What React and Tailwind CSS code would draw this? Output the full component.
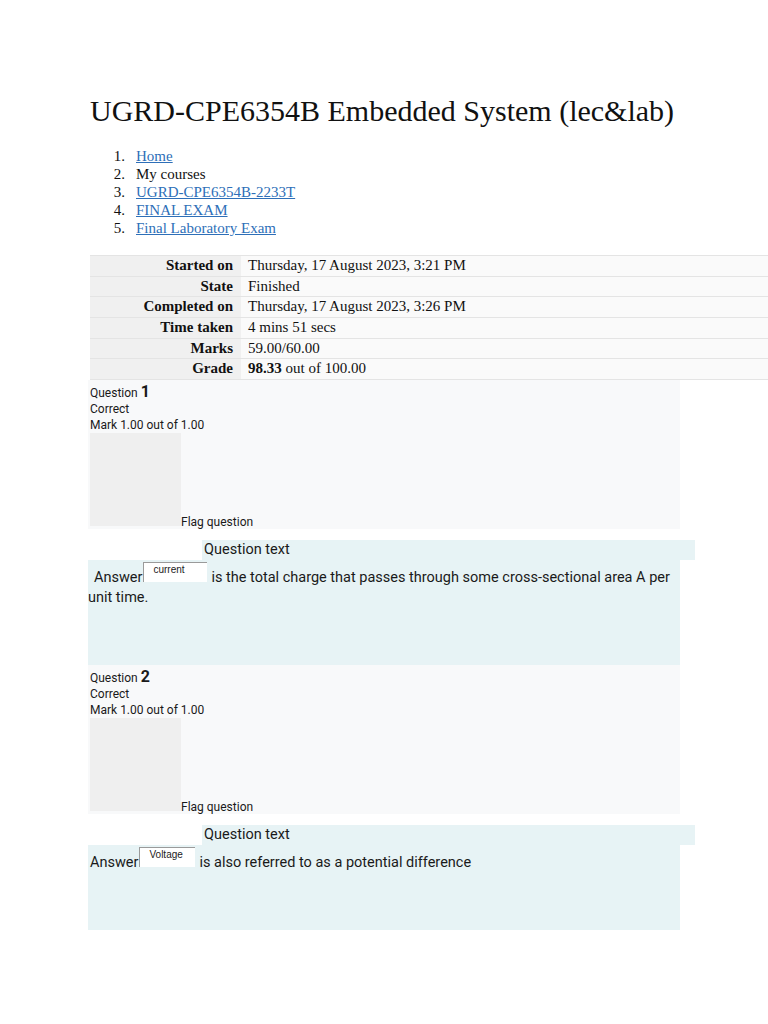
const summary = [
  ['Started on', 'Thursday, 17 August 2023, 3:21 PM'],
  ['State', 'Finished'],
  ['Completed on', 'Thursday, 17 August 2023, 3:26 PM'],
  ['Time taken', '4 mins 51 secs'],
  ['Marks', '59.00/60.00'],
  ['Grade', null],
];

const crumbs = [
  ['Home', true],
  ['My courses', false],
  ['UGRD-CPE6354B-2233T', true],
  ['FINAL EXAM', true],
  ['Final Laboratory Exam', true],
];

const sans = { fontFamily: 'Roboto, "Noto Sans", sans-serif' };

function QuestionInfo({ num }) {
  return (
    <div className="w-[592px] h-[149px] bg-[#f8f9fa] pt-[3px] pl-[2px] text-[12px] text-[#1a1a1a] flex flex-col">
      <div className="h-[18px] leading-[18px]">
        Question <span className="text-[16px] font-bold">{num}</span>
      </div>
      <div className="h-[16px] leading-[16px]">Correct</div>
      <div className="h-[16px] leading-[16px]">Mark 1.00 out of 1.00</div>
      <div className="flex items-end">
        <div className="w-[91px] h-[93px] bg-[#efefef]" />
        <span className="leading-[8px]">Flag question</span>
      </div>
    </div>
  );
}

function QuestionText({ answer, inputW, lead, children, h }) {
  return (
    <div className="pt-[11px]">
      <div className="ml-[114px] w-[493px] h-[20px] bg-[#e7f3f5] pl-[2px] text-[14.5px] leading-[20px] text-[#1a1a1a]">
        Question text
      </div>
      <div className={`w-[592px] ${h} bg-[#e7f3f5] pt-[8px] text-[14.5px] leading-[20px] text-[#1a1a1a]`}>
        <span className={lead}>Answer</span>
        <span
          className="relative -top-[6px] ml-[1px] inline-block h-[20px] align-top bg-white border-t border-l border-[#9a9a9a] text-[10px] leading-[14px] pl-[9px] text-[#222] mr-[4px]"
          style={{ fontFamily: '"Liberation Sans", Arial, sans-serif', width: inputW }}
        >
          {answer}
        </span>
        {children}
      </div>
    </div>
  );
}

export default function App() {
  return (
    <div className="bg-white min-h-[1024px] w-[768px] overflow-hidden pt-[92px] pl-[88px]">
      <div style={{ fontFamily: '"Liberation Serif", "Times New Roman", serif' }} className="text-[#111]">
        <h1 className="pl-[2px] text-[30px] leading-[38px] font-normal">
          UGRD-CPE6354B Embedded System (lec&amp;lab)
        </h1>
        <ol className="mt-[17px] text-[15px] leading-[18px]">
          {crumbs.map(([t, link], i) => (
            <li key={t} className="flex">
              <span className="w-[37px] text-right">{i + 1}.</span>
              <span className="pl-[11px]">
                {link ? <a href="#" className="text-[#2e6fb8] underline">{t}</a> : t}
              </span>
            </li>
          ))}
        </ol>
        <div className="mt-[18px] ml-[2px] w-[678px] border-t border-[#e4e4e4] text-[15px]">
          {summary.map(([k, v]) => (
            <div key={k} className="flex h-[20.7px] border-b border-[#e4e4e4] leading-[19px]">
              <div className="w-[151px] shrink-0 bg-[#f0f0f0] text-right pr-[8px] font-bold">{k}</div>
              <div className="flex-1 bg-[#fafafa] pl-[7px]">
                {v ?? (
                  <>
                    <b>98.33</b> out of 100.00
                  </>
                )}
              </div>
            </div>
          ))}
        </div>
      </div>
      <div style={sans}>
        <QuestionInfo num="1" />
        <QuestionText answer="current" inputW="64px" lead="pl-[6px]" h="h-[105px]">
          is the total charge that passes through some cross-sectional area A per unit time.
        </QuestionText>
        <QuestionInfo num="2" />
        <QuestionText answer="Voltage" inputW="56px" lead="pl-[2px]" h="h-[85px]">
          is also referred to as a potential difference
        </QuestionText>
      </div>
    </div>
  );
}
